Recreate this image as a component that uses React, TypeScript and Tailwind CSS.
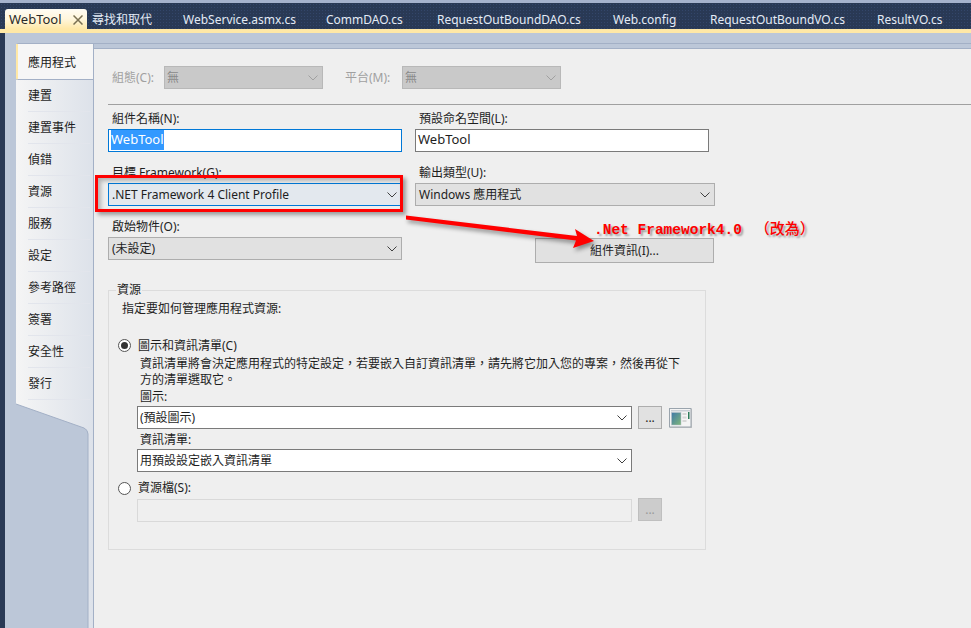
import type { ReactNode } from "react";

const tabs = [
  { name: "尋找和取代", width: "w-[91px]" },
  { name: "WebService.asmx.cs", width: "w-[143px]" },
  { name: "CommDAO.cs", width: "w-[111px]" },
  { name: "RequestOutBoundDAO.cs", width: "w-[176px]" },
  { name: "Web.config", width: "w-[97px]" },
  { name: "RequestOutBoundVO.cs", width: "w-[167px]" },
  { name: "ResultVO.cs", width: "w-[66px]" },
];

const sideItems = ["建置", "建置事件", "偵錯", "資源", "服務", "設定", "參考路徑", "簽署", "安全性", "發行"];

function Chevron({ color = "#404040" }: { color?: string }) {
  return (
    <svg width="10" height="6" viewBox="0 0 10 6" className="shrink-0" fill="none">
      <path d="M0.5 0.5 L5 5 L9.5 0.5" stroke={color} strokeWidth="1" />
    </svg>
  );
}

function Combo({ className, children, chevron }: { className: string; children?: ReactNode; chevron?: string }) {
  return (
    <div className={`flex h-[23px] shrink-0 items-center justify-between border pl-[2px] pr-[4px] ${className}`}>
      <span className="whitespace-nowrap">{children}</span>
      <Chevron color={chevron} />
    </div>
  );
}

function Label({ children }: { children: ReactNode }) {
  return <div className="h-[19px] pl-[4px] leading-[18px] whitespace-nowrap">{children}</div>;
}

function ManifestIcon() {
  return (
    <svg width="23" height="20" viewBox="0 0 23 20" className="ml-[7px] mt-[2px] shrink-0">
      <defs>
        <linearGradient id="pic" x1="0" y1="0" x2="1" y2="1">
          <stop offset="0" stopColor="#3f78a8" />
          <stop offset="1" stopColor="#7fb77a" />
        </linearGradient>
      </defs>
      <rect x="1" y="1" width="22" height="19" fill="#9a9a9a" opacity="0.5" />
      <rect x="0.5" y="0.5" width="21.5" height="18.5" fill="#f4f4f4" stroke="#9aa4ad" />
      <rect x="2" y="2" width="19" height="1.5" fill="#c8ced4" />
      <rect x="2.5" y="4.5" width="9.5" height="12.5" fill="url(#pic)" stroke="#b8c0c8" strokeWidth="0.5" />
      <rect x="13.5" y="5" width="4" height="2" fill="#d6d6d6" />
      <rect x="13.5" y="8.5" width="4" height="2" fill="#d6d6d6" />
      <rect x="13.5" y="12" width="4" height="2" fill="#d6d6d6" />
      <rect x="19" y="4" width="1.5" height="7" fill="#2e7d5b" />
    </svg>
  );
}

function Radio({ checked }: { checked?: boolean }) {
  return (
    <div className="flex h-[13px] w-[13px] shrink-0 items-center justify-center rounded-full border border-[#555] bg-white">
      {checked && <div className="h-[7px] w-[7px] rounded-full bg-[#333]" />}
    </div>
  );
}

export default function App() {
  return (
    <div className="relative flex h-[628px] w-[971px] flex-col overflow-hidden bg-[#efefef] font-['Noto_Sans','Noto_Sans_CJK_TC',sans-serif] text-[12px] text-[#1e1e1e]">
      <div className="h-[3px] shrink-0 bg-[#a5b2cc]" />

      {/* document tabs */}
      <div className="flex h-[26px] shrink-0 items-end bg-[#293955] pl-[5px] [background-image:radial-gradient(#33466a_0.6px,transparent_0.8px)] [background-size:3px_3px]">
        <div className="flex h-[20px] w-[82px] shrink-0 items-center rounded-t-[3px] bg-gradient-to-b from-[#fffcf4] via-[#fff6dc] to-[#ffe8a6] pl-[4px] pt-[2px] text-[13px] text-[#2a2a2a]">
          <span>WebTool</span>
          <svg width="10" height="10" viewBox="0 0 10 10" className="ml-[11px]">
            <path d="M0.5 0.5 L9.5 9.5 M9.5 0.5 L0.5 9.5" stroke="#7a7052" strokeWidth="1.5" />
          </svg>
        </div>
        <div className="ml-[5px] flex h-[20px] items-center whitespace-nowrap pt-[2px] text-[#e4ebf5]">
          {tabs.map((t) => (
            <span key={t.name} className={`shrink-0 ${t.width}`}>
              {t.name}
            </span>
          ))}
        </div>
      </div>
      <div className="h-[4px] shrink-0 bg-[#ffe8a6]" />

      <div className="flex min-h-0 flex-1 bg-[#bcc7d8]">
        <div className="w-[5px] shrink-0 bg-[#293955]" />
        <div className="flex min-w-0 flex-1 flex-col pl-[11px] pt-[10px]">
          <div className="flex min-h-0 flex-1 rounded-tl-[3px] border-t border-[#a3b0c6]">
            {/* property page list */}
            <div className="flex w-[77px] shrink-0 flex-col">
              <div className="flex h-[36px] shrink-0 items-center rounded-bl-[2px] border-b border-l-2 border-b-[#a3b0c6] border-l-[#ffe8a6] bg-[#f6f6f6] pl-[10px] pt-[3px] text-[#1a1a1a]">
                應用程式
              </div>
              <div className="flex flex-col bg-gradient-to-r from-[#f5f5f5] to-[#dde2ea]">
                {sideItems.map((s) => (
                  <div key={s} className="flex h-[32px] items-center pl-[12px]">
                    <div className="flex h-full w-[62px] items-center border-b border-[#e2e5ec]">{s}</div>
                  </div>
                ))}
              </div>
              <svg width="77" height="229" viewBox="0 0 77 229" className="shrink-0">
                <defs>
                  <linearGradient id="side" x1="0" y1="0" x2="1" y2="0">
                    <stop offset="0" stopColor="#f5f5f5" />
                    <stop offset="1" stopColor="#dde2ea" />
                  </linearGradient>
                </defs>
                <rect width="77" height="229" fill="url(#side)" />
                <path d="M0 4 L68 28 Q72 30 72 34 L72 229 L0 229 Z" fill="#bcc7d8" />
                <path d="M0 4 L68 28 Q72 30 72 34 L72 229" fill="none" stroke="#a3b0c6" />
              </svg>
            </div>

            {/* application page */}
            <div className="flex min-w-0 flex-1 flex-col">
              <div className="h-[4px] shrink-0 border-l border-[#a3b0c6]" />
              <div className="flex min-h-0 flex-1 flex-col border-l border-t border-[#a3b0c6] bg-[#efefef] pl-[14px]">
                <div className="mt-[17px] flex h-[23px] items-center text-[#a0a0a0]">
                  <span className="w-[56px] pl-[4px] whitespace-nowrap">組態(C):</span>
                  <Combo className="w-[159px] border-[#b8b8b8] bg-[#c9c9c9] text-[#8a8a8a]" chevron="#a0a0a0">
                    無
                  </Combo>
                  <span className="ml-[22px] w-[57px] whitespace-nowrap">平台(M):</span>
                  <Combo className="w-[159px] border-[#b8b8b8] bg-[#c9c9c9] text-[#8a8a8a]" chevron="#a0a0a0">
                    無
                  </Combo>
                </div>
                <div className="mt-[15px] h-px shrink-0 bg-[#a0a0a0]" />

                <div className="mt-[5px] flex gap-[13px]">
                  <div className="w-[294px]">
                    <Label>組件名稱(N):</Label>
                    <div className="flex h-[23px] items-center border border-[#0078d7] bg-white pb-[1px] pl-[2px] text-[13px]">
                      <span className="bg-[#3399ff] text-white">WebTool</span>
                    </div>
                  </div>
                  <div className="w-[294px]">
                    <Label>預設命名空間(L):</Label>
                    <div className="flex h-[23px] items-center border border-[#7a7a7a] bg-white pb-[1px] pl-[2px] text-[13px]">
                      WebTool
                    </div>
                  </div>
                </div>

                <div className="mt-[12px] flex gap-[13px]">
                  <div className="w-[294px]">
                    <Label>目標 Framework(G):</Label>
                    <Combo className="border-[#0078d7] bg-[#e3e8ee] pl-[3px]">.NET Framework 4 Client Profile</Combo>
                  </div>
                  <div className="w-[300px]">
                    <Label>輸出類型(U):</Label>
                    <Combo className="border-[#adadad] bg-[#e1e1e1] pl-[3px]">Windows 應用程式</Combo>
                  </div>
                </div>

                <div className="mt-[12px] flex">
                  <div className="w-[294px]">
                    <Label>啟始物件(O):</Label>
                    <Combo className="border-[#adadad] bg-[#e1e1e1] pl-[3px]">(未設定)</Combo>
                  </div>
                  <button className="ml-[133px] mt-[20px] h-[25px] w-[179px] border border-[#adadad] bg-[#e1e1e1] text-[12px] text-[#1e1e1e]">
                    組件資訊(I)...
                  </button>
                </div>

                {/* resources group */}
                <div className="mt-[27px] h-[260px] w-[598px] shrink-0 border border-[#dcdcdc]">
                  <div className="-mt-[9px] ml-[7px] h-[16px] w-fit bg-[#efefef] px-[1px] leading-[16px]">資源</div>
                  <div className="mt-[3px] ml-[13px] h-[16px] leading-[16px]">指定要如何管理應用程式資源:</div>

                  <div className="mt-[20px] ml-[9px] flex h-[16px] items-center gap-[7px]">
                    <Radio checked />
                    <span className="pt-[1px]">圖示和資訊清單(C)</span>
                  </div>
                  <div className="mt-[3px] ml-[31px] w-[544px] leading-[16px]">
                    資訊清單將會決定應用程式的特定設定，若要嵌入自訂資訊清單，請先將它加入您的專案，然後再從下方的清單選取它。
                  </div>

                  <div className="mt-[1px] ml-[31px] h-[16px] leading-[16px]">圖示:</div>
                  <div className="mt-[1px] ml-[28px] flex">
                    <Combo className="w-[495px] border-[#7a7a7a] bg-white">(預設圖示)</Combo>
                    <button className="ml-[6px] h-[23px] w-[24px] border border-[#adadad] bg-[#e1e1e1] leading-[18px]">...</button>
                    <ManifestIcon />
                  </div>

                  <div className="mt-[3px] ml-[31px] h-[16px] leading-[16px]">資訊清單:</div>
                  <div className="mt-[1px] ml-[28px]">
                    <Combo className="w-[495px] border-[#7a7a7a] bg-white">用預設設定嵌入資訊清單</Combo>
                  </div>

                  <div className="mt-[8px] ml-[9px] flex h-[16px] items-center gap-[7px]">
                    <Radio />
                    <span>資源檔(S):</span>
                  </div>
                  <div className="mt-[2px] ml-[28px] flex items-start">
                    <div className="mt-[1px] h-[23px] w-[495px] border border-[#d9d9d9] bg-[#efefef]" />
                    <button className="ml-[6px] h-[23px] w-[24px] border border-[#bfbfbf] bg-[#cccccc] leading-[18px] text-[#9a9a9a]">...</button>
                  </div>
                </div>
              </div>
            </div>
          </div>
        </div>
      </div>

      {/* annotations drawn over the screenshot */}
      <div className="absolute left-[95px] top-[175px] h-[37px] w-[308px] border-[3px] border-[#ff0000] shadow-[3px_3px_4px_rgba(0,0,0,0.35),inset_3px_3px_4px_rgba(0,0,0,0.25)]" />
      <svg width="971" height="628" viewBox="0 0 971 628" className="pointer-events-none absolute left-0 top-0 [filter:drop-shadow(2px_3px_2px_rgba(0,0,0,0.4))]">
        <polygon points="406,215.5 577,236 575,229 594,241 573,248 576,240.5 406,219.5" fill="#ff0000" />
      </svg>
      <div className="absolute left-[594px] top-[218px] whitespace-nowrap font-['Liberation_Mono','Noto_Sans_CJK_TC',monospace] text-[14.5px] font-bold leading-[20px] text-[#ff0000] [text-shadow:2px_2px_2px_rgba(0,0,0,0.35)]">
        .Net Framework4.0 <span className="ml-[4px] font-['Noto_Sans_CJK_TC',sans-serif] text-[15px] font-medium">（改為）</span>
      </div>
    </div>
  );
}
